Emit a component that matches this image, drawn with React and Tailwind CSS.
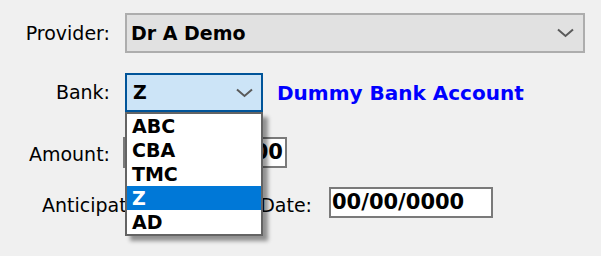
import React from "react";

function Chevron() {
  return (
    <svg width="17" height="10" viewBox="0 0 17 10" className="shrink-0">
      <path d="M1 1.5 L8.5 8 L16 1.5" fill="none" stroke="#5a5a5a" strokeWidth="2" />
    </svg>
  );
}

const items = ["ABC", "CBA", "TMC", "Z", "AD"];

export default function App() {
  return (
    <div
      className="relative w-[601px] h-[256px] bg-[#f0f0f0] text-black overflow-hidden text-[19px] leading-none"
      style={{ fontFamily: '"DejaVu Sans", Verdana, sans-serif' }}
    >
      <div className="flex flex-col pt-[13px]">
        {/* Provider */}
        <div className="flex items-center h-[40px]">
          <div className="w-[110px] text-right">Provider:</div>
          <div className="ml-[15px] w-[460px] h-[40px] flex items-center justify-between border-2 border-[#adadad] bg-[#e1e1e1] pl-[4px] pr-[9px] font-bold">
            <span>Dr A Demo</span>
            <Chevron />
          </div>
        </div>
        {/* Bank */}
        <div className="flex items-center h-[39px] mt-[20px]">
          <div className="w-[110px] text-right">Bank:</div>
          <div className="ml-[15px] w-[138px] h-[39px] flex items-center justify-between border-2 border-[#005499] bg-[#cce4f7] pl-[6px] pr-[8px] font-bold">
            <span>Z</span>
            <Chevron />
          </div>
          <div className="ml-[14px] text-[20px] font-bold text-[#0000ff]">Dummy Bank Account</div>
        </div>
        {/* Amount */}
        <div className="flex items-center h-[31px] mt-[25px]">
          <div className="w-[110px] text-right pt-[3px]">Amount:</div>
          <div className="ml-[13px] w-[164px] h-[31px] flex items-center justify-end border-2 border-[#7a7a7a] bg-white pr-[2px] font-bold text-[21px]">
            0.00
          </div>
        </div>
        {/* Anticipated Payment Date */}
        <div className="flex items-center h-[31px] mt-[19px]">
          <div className="w-[312px] pl-[42px] flex justify-between pt-[5px]">
            <span>Anticipated Payment</span>
            <span>Date:</span>
          </div>
          <div className="ml-[17px] w-[164px] h-[31px] flex items-center border-2 border-[#7a7a7a] bg-white pl-[1px] font-bold text-[21px]">
            00/00/0000
          </div>
        </div>
      </div>

      {/* Open dropdown list */}
      <div className="absolute left-[125px] top-[112px] w-[138px] border-2 border-[#646464] bg-white shadow-[5px_5px_4px_rgba(0,0,0,0.4)] font-bold">
        {items.map((it) => (
          <div
            key={it}
            className={
              it === "Z"
                ? "h-[24px] flex items-center pl-[5px] bg-[#0078d7] text-white"
                : "h-[24px] flex items-center pl-[5px]"
            }
          >
            {it}
          </div>
        ))}
      </div>
    </div>
  );
}
